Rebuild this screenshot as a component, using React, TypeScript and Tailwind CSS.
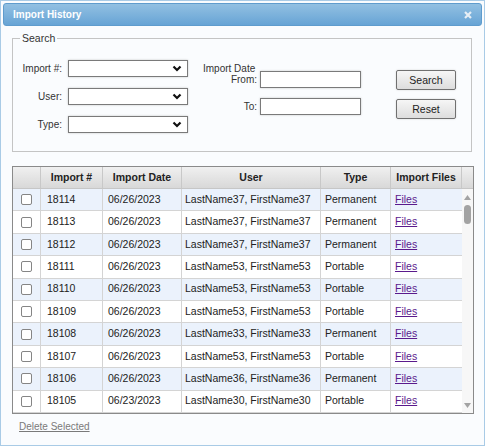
import React from "react";

const rows = [
  { id: "18114", date: "06/26/2023", user: "LastName37, FirstName37", type: "Permanent" },
  { id: "18113", date: "06/26/2023", user: "LastName37, FirstName37", type: "Permanent" },
  { id: "18112", date: "06/26/2023", user: "LastName37, FirstName37", type: "Permanent" },
  { id: "18111", date: "06/26/2023", user: "LastName53, FirstName53", type: "Portable" },
  { id: "18110", date: "06/26/2023", user: "LastName53, FirstName53", type: "Portable" },
  { id: "18109", date: "06/26/2023", user: "LastName53, FirstName53", type: "Portable" },
  { id: "18108", date: "06/26/2023", user: "LastName33, FirstName33", type: "Permanent" },
  { id: "18107", date: "06/26/2023", user: "LastName53, FirstName53", type: "Portable" },
  { id: "18106", date: "06/26/2023", user: "LastName36, FirstName36", type: "Permanent" },
  { id: "18105", date: "06/23/2023", user: "LastName30, FirstName30", type: "Portable" },
];

const Chevron = () => (
  <svg width="10" height="7" viewBox="0 0 10 7">
    <polyline points="1.5,1.5 5,5 8.5,1.5" fill="none" stroke="#111" strokeWidth="2.2" />
  </svg>
);

const SelectBox = () => (
  <div className="w-[120px] h-[17px] bg-white border border-[#7a7a7a] shadow-[0_0_2px_#c8c8c8] flex items-center justify-end pr-[5px]">
    <Chevron />
  </div>
);

const TextBox = () => (
  <div className="w-[101px] h-[17px] bg-white border border-[#7a7a7a] shadow-[0_0_2px_#c8c8c8]" />
);

const Btn = ({ label }: { label: string }) => (
  <button className="w-[60px] h-[20px] border border-[#707070] rounded-[2px] bg-linear-to-b from-[#f6f6f6] to-[#dddddd] text-[10.5px] text-[#222] leading-none shadow-[0_0_2px_#d0d0d0]">
    {label}
  </button>
);

const cols = "grid grid-cols-[28px_62px_79px_139px_70px_71px]";

export default function App() {
  return (
    <div className="w-[485px] h-[446px] border border-[#a9cbe6] bg-[#fafcfe] p-[2px] flex flex-col font-['Liberation_Sans',Arial,sans-serif] text-[#222]">
      <div className="h-[23px] shrink-0 rounded-[3px] border border-[#5f9ccd] bg-linear-to-b from-[#92c0e2] to-[#67a4d5] flex items-center justify-between pl-[9px] pr-[9px]">
        <span className="text-white font-bold text-[10px]">Import History</span>
        <svg width="8" height="8" viewBox="0 0 8 8">
          <path d="M1 1 L7 7 M7 1 L1 7" stroke="#e6eef5" strokeWidth="2.2" />
        </svg>
      </div>

      <div className="relative ml-[9px] mt-[12px] w-[460px] h-[114px] border border-[#c4c4c4] flex text-[10px] text-[#333]">
        <span className="absolute left-[7px] top-[-7px] px-[2px] bg-[#fafcfe] text-[10.5px] leading-[12px]">Search</span>

        <div className="flex flex-col gap-[11px] mt-[21px]">
          {["Import #:", "User:", "Type:"].map((l) => (
            <div key={l} className="flex items-center">
              <span className="w-[49px] text-right">{l}</span>
              <div className="ml-[6px]">
                <SelectBox />
              </div>
            </div>
          ))}
        </div>

        <div className="ml-[15px] mt-[24px] flex flex-col">
          <div className="flex items-start">
            <div className="w-[54px] flex flex-col leading-[11px]">
              <span>Import Date</span>
              <span className="text-right">From:</span>
            </div>
            <div className="ml-[3px] mt-[8px]">
              <TextBox />
            </div>
          </div>
          <div className="flex items-center mt-[10px]">
            <span className="w-[54px] text-right">To:</span>
            <div className="ml-[3px]">
              <TextBox />
            </div>
          </div>
        </div>

        <div className="ml-[35px] mt-[31px] flex flex-col gap-[9px]">
          <Btn label="Search" />
          <Btn label="Reset" />
        </div>
      </div>

      <div className="ml-[9px] mt-[14px] w-[462px] h-[248px] border border-[#8a8a8a] flex overflow-hidden text-[10.5px] bg-white">
        <div className="w-[449px] flex flex-col">
          <div className={`${cols} h-[22px] shrink-0 bg-linear-to-b from-[#f0f0f0] to-[#d8d8d8] border-b border-[#c6c6c6] font-bold text-[10.5px] text-[#222]`}>
            {["", "Import #", "Import Date", "User", "Type", "Import Files"].map((h, i) => (
              <div key={i} className="flex items-center justify-center border-r border-[#c8c8c8]">
                {h}
              </div>
            ))}
          </div>
          {rows.map((r, i) => (
            <div
              key={r.id}
              className={`${cols} h-[22.4px] shrink-0 border-b border-[#d4d4d4] ${i % 2 === 0 ? "bg-[#ebf2fc]" : "bg-white"}`}
            >
              <div className="flex items-center justify-center border-r border-[#d4d4d4]">
                <div className="w-[11px] h-[11px] rounded-[2px] border border-[#858585] bg-white" />
              </div>
              <div className="flex items-center pl-[6px] border-r border-[#d4d4d4]">{r.id}</div>
              <div className="flex items-center pl-[5px] border-r border-[#d4d4d4]">{r.date}</div>
              <div className="flex items-center pl-[3px] border-r border-[#d4d4d4]">{r.user}</div>
              <div className="flex items-center pl-[4px] border-r border-[#d4d4d4]">{r.type}</div>
              <div className="flex items-center pl-[4px]">
                <a className="text-[#5a1a8c] underline">Files</a>
              </div>
            </div>
          ))}
          <div className={`${cols} flex-1 bg-white`}>
            <div className="border-r border-[#d4d4d4]" />
            <div className="border-r border-[#d4d4d4]" />
            <div className="border-r border-[#d4d4d4]" />
            <div className="border-r border-[#d4d4d4]" />
            <div className="border-r border-[#d4d4d4]" />
            <div />
          </div>
        </div>
        <div className="flex-1 flex flex-col">
          <div className="h-[22px] shrink-0 bg-linear-to-b from-[#f0f0f0] to-[#d8d8d8] border-b border-[#c6c6c6]" />
          <div className="flex-1 bg-[#f7f7f7] flex flex-col items-center pt-[6px] pb-[5px]">
            <svg width="7" height="5" viewBox="0 0 7 5">
              <polygon points="0,5 7,5 3.5,0" fill="#a3a3a3" />
            </svg>
            <div className="mt-[5px] w-[7px] h-[19px] rounded-full bg-[#a3a3a3]" />
            <div className="flex-1" />
            <svg width="7" height="5" viewBox="0 0 7 5">
              <polygon points="0,0 7,0 3.5,5" fill="#a3a3a3" />
            </svg>
          </div>
        </div>
      </div>

      <div className="ml-[16px] mt-[7px] text-[10px] leading-[12px]">
        <a className="text-[#7a7a7a] underline">Delete Selected</a>
      </div>
    </div>
  );
}
